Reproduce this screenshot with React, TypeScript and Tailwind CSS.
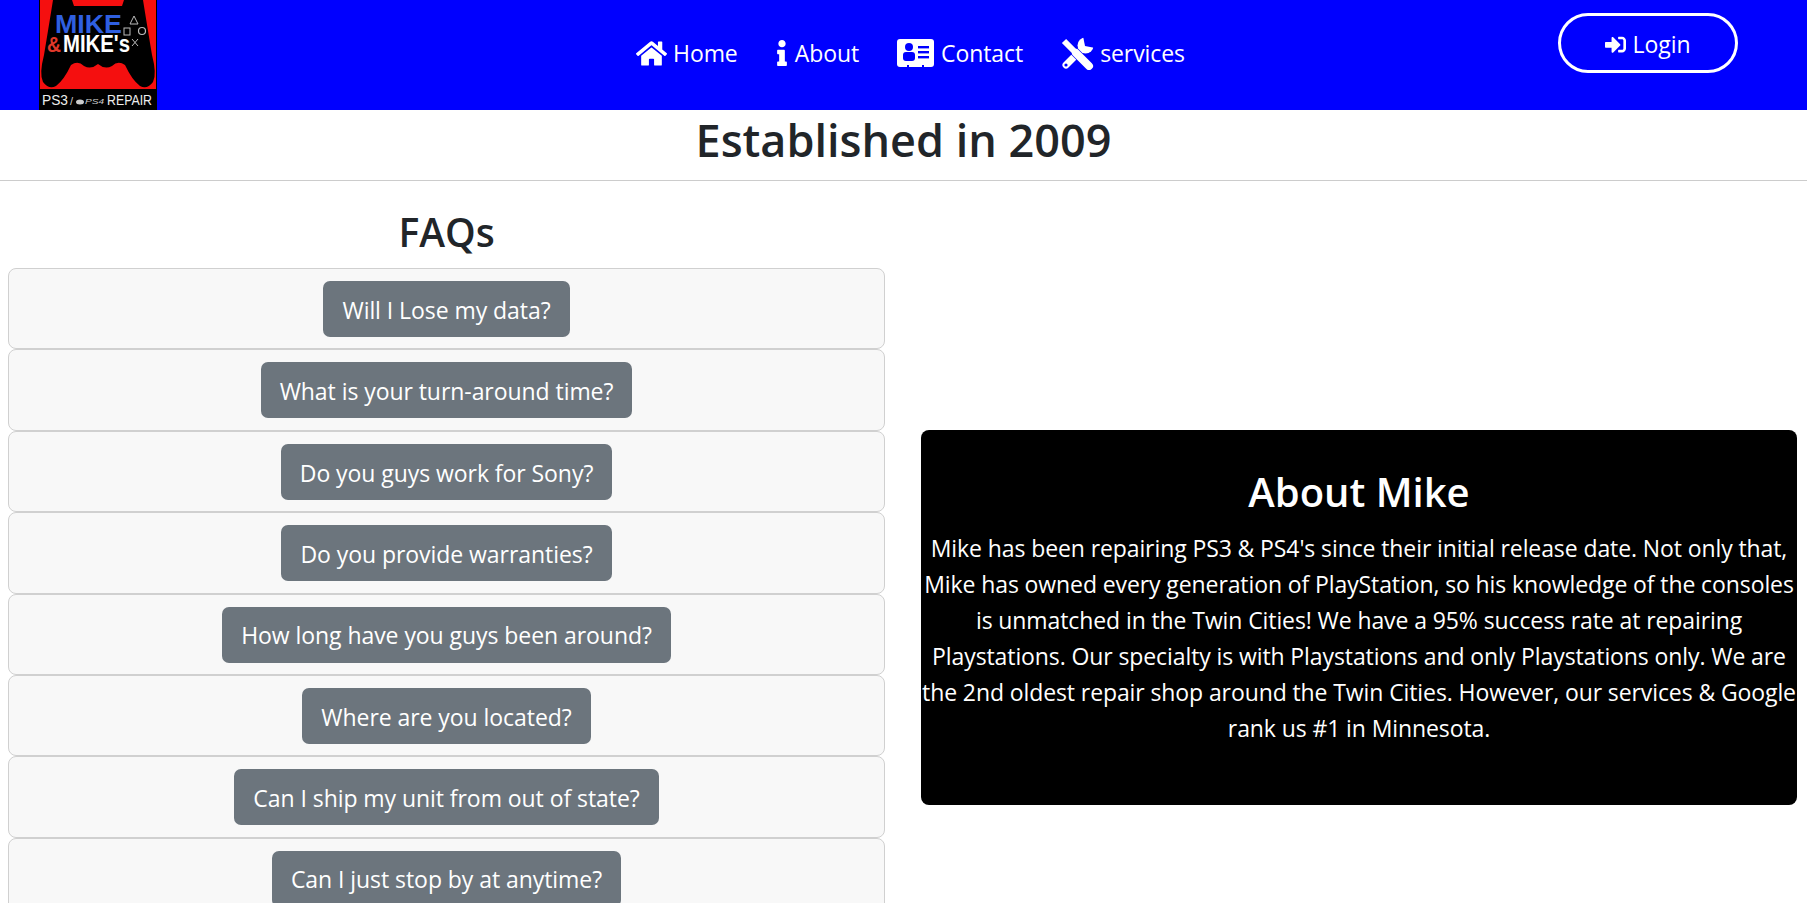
import { FaHome, FaInfo, FaSignInAlt } from "react-icons/fa";

const faqs = [
  "Will I Lose my data?",
  "What is your turn-around time?",
  "Do you guys work for Sony?",
  "Do you provide warranties?",
  "How long have you guys been around?",
  "Where are you located?",
  "Can I ship my unit from out of state?",
  "Can I just stop by at anytime?",
];

function ContactIcon() {
  return (
    <svg width="37" height="28" viewBox="0 0 37 28">
      <rect width="37" height="28" rx="3" fill="#fff" />
      <rect x="10" y="26" width="2" height="2" fill="#00f" />
      <rect x="25" y="26" width="2" height="2" fill="#00f" />
      <circle cx="12" cy="8" r="4" fill="#00f" />
      <rect x="6" y="13" width="12" height="9" rx="3" fill="#00f" />
      <rect x="21" y="7" width="11" height="2.4" fill="#00f" />
      <rect x="21" y="12" width="11" height="2.4" fill="#00f" />
      <rect x="21" y="17" width="11" height="2.4" fill="#00f" />
    </svg>
  );
}

function ServicesIcon() {
  return (
    <svg width="33" height="33" viewBox="0 0 33 33">
      {/* wrench */}
      <line x1="5" y1="28" x2="23" y2="10" stroke="#fff" strokeWidth="7" strokeLinecap="round" />
      <circle cx="24.5" cy="8.5" r="8" fill="#fff" />
      <polygon points="24,9 22,-1 34,-1 34,11" fill="#00f" />
      <circle cx="5" cy="28" r="1.6" fill="#00f" />
      {/* screwdriver */}
      <line x1="12" y1="13" x2="20" y2="21" stroke="#00f" strokeWidth="9" />
      <line x1="3" y1="4" x2="14" y2="15" stroke="#fff" strokeWidth="6" />
      <line x1="15" y1="16" x2="28" y2="29" stroke="#fff" strokeWidth="8" strokeLinecap="round" />
    </svg>
  );
}

const navItems = [
  { label: "Home", gap: "gap-[6px]", icon: <FaHome className="text-[31px]" /> },
  { label: "About", gap: "gap-[7px]", icon: <FaInfo className="w-[12px] h-[26px]" /> },
  { label: "Contact", gap: "gap-[7px]", icon: <ContactIcon /> },
  { label: "services", gap: "gap-[6px]", icon: <ServicesIcon /> },
];

function Logo() {
  const font = "'Liberation Sans', sans-serif";
  return (
    <svg width="118" height="110" viewBox="0 0 118 110" className="block">
      <rect width="118" height="110" fill="#000" />
      <rect x="1" y="0" width="116" height="89" fill="#f50f0f" />
      <path
        d="M14 0 L33 0 L35 6 L83 6 L85 0 L104 0 Q108 25 113 55 Q118 74 114 82 Q108 90 101 86 Q93 80 86 65 Q79 60 73 66 Q66 70 59 64 Q52 70 45 66 Q39 60 32 65 Q25 80 17 86 Q10 90 4 82 Q0 74 5 55 Q10 25 14 0 Z"
        fill="#000"
      />
      <text x="16" y="33" fontFamily={font} fontWeight="700" fontSize="25" fill="#2f5fe0" textLength="67" lengthAdjust="spacingAndGlyphs">MIKE</text>
      <text x="8" y="52" fontFamily={font} fontWeight="700" fontSize="22" fill="#e0382a" textLength="14" lengthAdjust="spacingAndGlyphs">&amp;</text>
      <text x="24" y="52" fontFamily={font} fontWeight="700" fontSize="23" fill="#fff" textLength="67" lengthAdjust="spacingAndGlyphs">MIKE's</text>
      <path d="M95 16 L99 24 L91 24 Z" fill="none" stroke="#bbb" strokeWidth="1" />
      <rect x="85" y="28" width="6" height="7" fill="none" stroke="#bbb" strokeWidth="1" />
      <circle cx="103" cy="31" r="3.5" fill="none" stroke="#bbb" strokeWidth="1.2" />
      <path d="M93 39 L99 46 M99 39 L93 46" stroke="#bbb" strokeWidth="1" />
      <text x="3" y="105" fontFamily={font} fontSize="14" fill="#eee" textLength="26" lengthAdjust="spacingAndGlyphs">PS3</text>
      <text x="31" y="105" fontFamily={font} fontSize="11" fill="#ccc">/</text>
      <ellipse cx="41" cy="102" rx="4" ry="2.5" fill="#ccc" />
      <text x="46" y="104" fontFamily={font} fontStyle="italic" fontSize="8" fill="#ccc" textLength="19" lengthAdjust="spacingAndGlyphs">PS4</text>
      <text x="68" y="105" fontFamily={font} fontSize="14" fill="#eee" textLength="45" lengthAdjust="spacingAndGlyphs">REPAIR</text>
    </svg>
  );
}

export default function App() {
  return (
    <div className="h-[903px] overflow-hidden bg-white text-[#212529] font-['Open_Sans','Noto_Sans',sans-serif]">
      {/* Header */}
      <header className="h-[110px] bg-[#0000ff] text-white flex">
        <div className="w-[39px]" />
        <Logo />
        <nav className="ml-[479px] flex items-center gap-[38px] h-[106px] text-[23px] tracking-[-0.08px]">
          {navItems.map((item) => (
            <a key={item.label} className={`flex items-center ${item.gap}`}>
              {item.icon}
              <span>{item.label}</span>
            </a>
          ))}
        </nav>
        <div className="ml-auto mr-[69px] mt-[13px]">
          <button className="w-[180px] h-[60px] pt-[2px] border-[3px] border-white rounded-[30px] flex items-center justify-center gap-[6px] text-[23px]">
            <FaSignInAlt className="text-[21px]" />
            Login
          </button>
        </div>
      </header>

      <h1 className="h-[71px] border-b border-[#ccc] text-center text-[45px] font-semibold leading-[60px]">
        Established in 2009
      </h1>

      <main className="flex">
        {/* FAQ list */}
        <section className="w-[903px] pl-[8px] pr-[18px]">
          <h2 className="h-[87px] pt-[27px] text-center text-[39px] font-semibold leading-[48px]">FAQs</h2>
          <div className="flex flex-col">
            {faqs.map((q) => (
              <div key={q} className="h-[81.4px] bg-[#f8f8f8] border border-[#d0d0d0] rounded-[8px] flex justify-center pt-[12px]">
                <button className="h-[56px] px-[19px] pt-[2px] bg-[#6c757d] text-white rounded-[7px] text-[23px] tracking-[-0.06px]">{q}</button>
              </div>
            ))}
          </div>
        </section>

        {/* About */}
        <section className="flex-1 pr-[10px] pl-[18px] pt-[249px]">
          <div className="h-[375px] bg-black text-white rounded-[8px] text-center pt-[38px]">
            <h2 className="text-[40px] font-semibold leading-[48px] mb-[14px]">About Mike</h2>
            <p className="text-[23px] leading-[36px] tracking-[-0.1px]">
              Mike has been repairing PS3 &amp; PS4's since their initial release date. Not only that, Mike has owned every generation of PlayStation, so his knowledge of the consoles is unmatched in the Twin Cities! We have a 95% success rate at repairing Playstations. Our specialty is with Playstations and only Playstations only. We are the 2nd oldest repair shop around the Twin Cities. However, our services &amp; Google rank us #1 in Minnesota.
            </p>
          </div>
        </section>
      </main>
    </div>
  );
}
